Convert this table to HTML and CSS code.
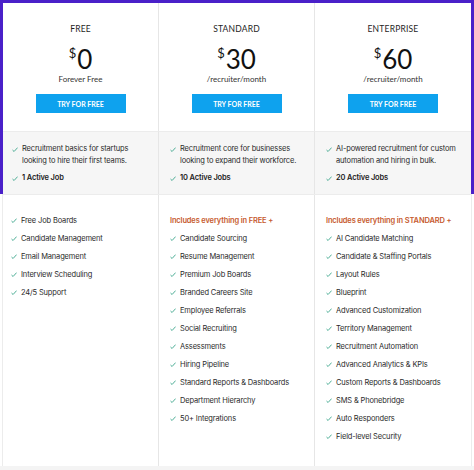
FILE: index.html
```html
<!DOCTYPE html>
<html>
<head>
<meta charset="utf-8">
<link rel="stylesheet" href="styles.css">
</head>
<body>
<div class="pricing">
  <div class="top">
    <div class="plan">
      <div class="name">FREE</div>
      <div class="price"><span class="cur">$</span>0</div>
      <div class="per">Forever Free</div>
      <a class="btn">TRY FOR FREE</a>
    </div>
    <div class="plan">
      <div class="name">STANDARD</div>
      <div class="price"><span class="cur">$</span>30</div>
      <div class="per">/recruiter/month</div>
      <a class="btn">TRY FOR FREE</a>
    </div>
    <div class="plan">
      <div class="name">ENTERPRISE</div>
      <div class="price"><span class="cur">$</span>60</div>
      <div class="per">/recruiter/month</div>
      <a class="btn">TRY FOR FREE</a>
    </div>
    <ul class="desc">
      <li><svg class="ck" viewBox="0 0 6 5"><path d="M0.5 3l1.6 1.5L5.6 0.6"/></svg><span>Recruitment basics for startups looking to hire their first teams.</span></li>
      <li class="b"><svg class="ck" viewBox="0 0 6 5"><path d="M0.5 3l1.6 1.5L5.6 0.6"/></svg><span>1 Active Job</span></li>
    </ul>
    <ul class="desc">
      <li><svg class="ck" viewBox="0 0 6 5"><path d="M0.5 3l1.6 1.5L5.6 0.6"/></svg><span>Recruitment core for businesses looking to expand their workforce.</span></li>
      <li class="b"><svg class="ck" viewBox="0 0 6 5"><path d="M0.5 3l1.6 1.5L5.6 0.6"/></svg><span>10 Active Jobs</span></li>
    </ul>
    <ul class="desc">
      <li><svg class="ck" viewBox="0 0 6 5"><path d="M0.5 3l1.6 1.5L5.6 0.6"/></svg><span>AI-powered recruitment for custom automation and hiring in bulk.</span></li>
      <li class="b"><svg class="ck" viewBox="0 0 6 5"><path d="M0.5 3l1.6 1.5L5.6 0.6"/></svg><span>20 Active Jobs</span></li>
    </ul>
  </div>
  <div class="features">
    <ul class="list">
      <li><svg class="ck" viewBox="0 0 6 5"><path d="M0.5 3l1.6 1.5L5.6 0.6"/></svg>Free Job Boards</li>
      <li><svg class="ck" viewBox="0 0 6 5"><path d="M0.5 3l1.6 1.5L5.6 0.6"/></svg>Candidate Management</li>
      <li><svg class="ck" viewBox="0 0 6 5"><path d="M0.5 3l1.6 1.5L5.6 0.6"/></svg>Email Management</li>
      <li><svg class="ck" viewBox="0 0 6 5"><path d="M0.5 3l1.6 1.5L5.6 0.6"/></svg>Interview Scheduling</li>
      <li><svg class="ck" viewBox="0 0 6 5"><path d="M0.5 3l1.6 1.5L5.6 0.6"/></svg>24/5 Support</li>
    </ul>
    <ul class="list">
      <li class="inc">Includes everything in FREE +</li>
      <li><svg class="ck" viewBox="0 0 6 5"><path d="M0.5 3l1.6 1.5L5.6 0.6"/></svg>Candidate Sourcing</li>
      <li><svg class="ck" viewBox="0 0 6 5"><path d="M0.5 3l1.6 1.5L5.6 0.6"/></svg>Resume Management</li>
      <li><svg class="ck" viewBox="0 0 6 5"><path d="M0.5 3l1.6 1.5L5.6 0.6"/></svg>Premium Job Boards</li>
      <li><svg class="ck" viewBox="0 0 6 5"><path d="M0.5 3l1.6 1.5L5.6 0.6"/></svg>Branded Careers Site</li>
      <li><svg class="ck" viewBox="0 0 6 5"><path d="M0.5 3l1.6 1.5L5.6 0.6"/></svg>Employee Referrals</li>
      <li><svg class="ck" viewBox="0 0 6 5"><path d="M0.5 3l1.6 1.5L5.6 0.6"/></svg>Social Recruiting</li>
      <li><svg class="ck" viewBox="0 0 6 5"><path d="M0.5 3l1.6 1.5L5.6 0.6"/></svg>Assessments</li>
      <li><svg class="ck" viewBox="0 0 6 5"><path d="M0.5 3l1.6 1.5L5.6 0.6"/></svg>Hiring Pipeline</li>
      <li><svg class="ck" viewBox="0 0 6 5"><path d="M0.5 3l1.6 1.5L5.6 0.6"/></svg>Standard Reports &amp; Dashboards</li>
      <li><svg class="ck" viewBox="0 0 6 5"><path d="M0.5 3l1.6 1.5L5.6 0.6"/></svg>Department Hierarchy</li>
      <li><svg class="ck" viewBox="0 0 6 5"><path d="M0.5 3l1.6 1.5L5.6 0.6"/></svg>50+ Integrations</li>
    </ul>
    <ul class="list">
      <li class="inc">Includes everything in STANDARD +</li>
      <li><svg class="ck" viewBox="0 0 6 5"><path d="M0.5 3l1.6 1.5L5.6 0.6"/></svg>AI Candidate Matching</li>
      <li><svg class="ck" viewBox="0 0 6 5"><path d="M0.5 3l1.6 1.5L5.6 0.6"/></svg>Candidate &amp; Staffing Portals</li>
      <li><svg class="ck" viewBox="0 0 6 5"><path d="M0.5 3l1.6 1.5L5.6 0.6"/></svg>Layout Rules</li>
      <li><svg class="ck" viewBox="0 0 6 5"><path d="M0.5 3l1.6 1.5L5.6 0.6"/></svg>Blueprint</li>
      <li><svg class="ck" viewBox="0 0 6 5"><path d="M0.5 3l1.6 1.5L5.6 0.6"/></svg>Advanced Customization</li>
      <li><svg class="ck" viewBox="0 0 6 5"><path d="M0.5 3l1.6 1.5L5.6 0.6"/></svg>Territory Management</li>
      <li><svg class="ck" viewBox="0 0 6 5"><path d="M0.5 3l1.6 1.5L5.6 0.6"/></svg>Recruitment Automation</li>
      <li><svg class="ck" viewBox="0 0 6 5"><path d="M0.5 3l1.6 1.5L5.6 0.6"/></svg>Advanced Analytics &amp; KPIs</li>
      <li><svg class="ck" viewBox="0 0 6 5"><path d="M0.5 3l1.6 1.5L5.6 0.6"/></svg>Custom Reports &amp; Dashboards</li>
      <li><svg class="ck" viewBox="0 0 6 5"><path d="M0.5 3l1.6 1.5L5.6 0.6"/></svg>SMS &amp; Phonebridge</li>
      <li><svg class="ck" viewBox="0 0 6 5"><path d="M0.5 3l1.6 1.5L5.6 0.6"/></svg>Auto Responders</li>
      <li><svg class="ck" viewBox="0 0 6 5"><path d="M0.5 3l1.6 1.5L5.6 0.6"/></svg>Field-level Security</li>
    </ul>
  </div>
  <div class="foot"></div>
</div>
</body>
</html>
```

FILE: styles.css
```css
* { box-sizing: border-box; }
html, body { margin: 0; padding: 0; background: #fff; }
body { width: 474px; height: 470px; overflow: hidden; font-family: Inter, "Open Sans", sans-serif; color: #2b2b2b; }
.pricing { width: 474px; }
.top {
  display: grid;
  grid-template-columns: 155px 156px 157px;
  border: 3px solid #4a20c9;
  border-bottom: none;
}
.plan {
  height: 128px;
  display: flex;
  flex-direction: column;
  align-items: center;
  padding-top: 20px;
  font-family: Lato, sans-serif;
  background: #fff;
}
.plan + .plan { border-left: 1px solid #e6e6e6; }
.name { font-size: 8.5px; line-height: 13px; color: #1e1e1e; letter-spacing: 0.2px; }
.price { font-size: 26px; line-height: 21px; height: 21px; margin-top: 13px; color: #111; display: flex; align-items: flex-start; }
.cur { font-size: 13px; line-height: 10px; margin-top: -1px; margin-right: 1px; }
.per { font-size: 8px; line-height: 12px; margin-top: 3px; color: #333; }
.btn {
  margin-top: 9px;
  width: 90px;
  height: 19px;
  background: #0ea2ee;
  color: #fff;
  font-size: 7px;
  font-weight: 700;
  display: flex;
  align-items: center;
  justify-content: center;
}
.desc {
  list-style: none;
  margin: 0;
  padding: 11px 0 0 9px;
  height: 63px;
  background: #f6f6f6;
  border-top: 1px solid #ececec;
}
.desc + .desc { border-left: 1px solid #e6e6e6; padding-left: 11px; }
.desc li { display: flex; font-size: 7.5px; letter-spacing: -0.15px; line-height: 12px; color: #2a2a2a; }
.desc li span { max-width: 122px; }
.desc li.b { font-weight: 600; margin-top: 5px; color: #1e1e1e; }
.ck { width: 6px; height: 5px; flex: none; margin: 4px 4px 0 0; fill: none; stroke: #3aa58a; stroke-width: 0.9; }
.features {
  display: grid;
  grid-template-columns: 155px 156px 157px;
  margin: 0 2px;
  border-left: 1px solid #ececec;
  border-right: 1px solid #ececec;
  height: 272px;
  border-top: 1px solid #ececec;
}
.list { list-style: none; margin: 0; padding: 16px 0 0 8px; }
.list + .list { border-left: 1px solid #e6e6e6; padding-left: 11px; }
.list li { display: flex; align-items: center; height: 18px; font-size: 7.5px; letter-spacing: -0.15px; color: #2a2a2a; white-space: nowrap; }
.list li .ck { margin: 0 4px 0 0; }
.list li.inc { color: #c65a2e; font-weight: 600; }
.foot { height: 10px; background: #f4f4f4; }
```
